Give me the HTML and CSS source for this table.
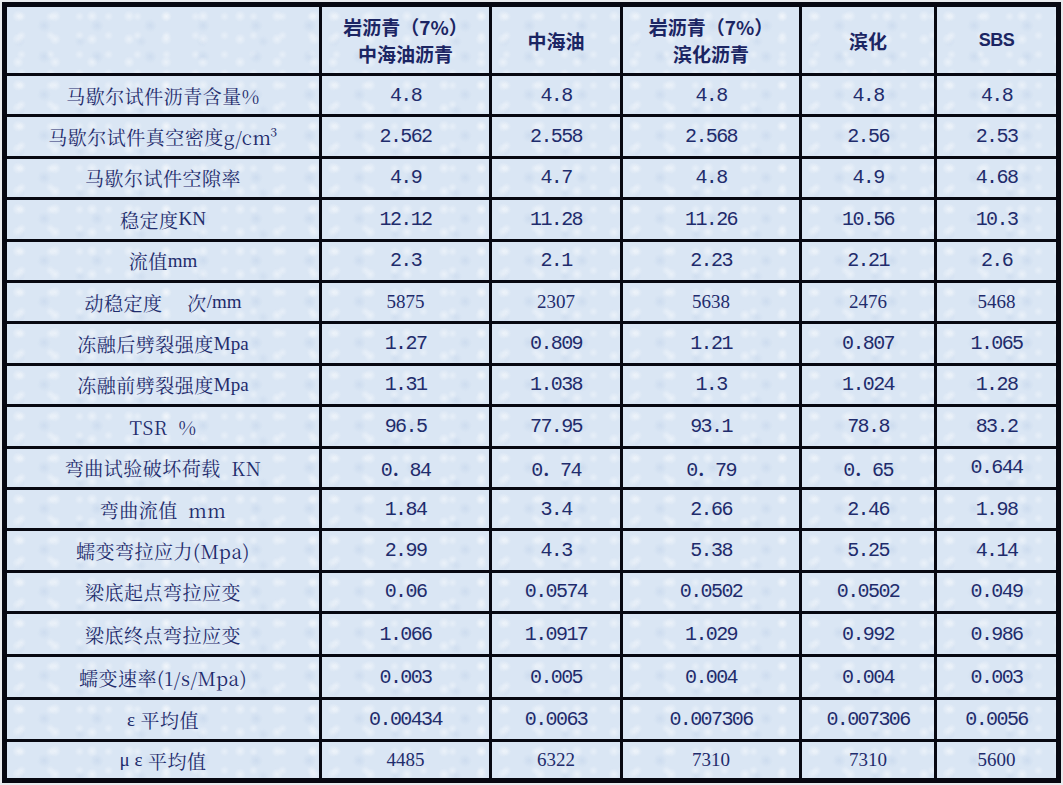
FILE: index.html
```html
<!DOCTYPE html>
<html lang="zh-CN">
<head>
<meta charset="utf-8">
<title>沥青性能对比</title>
<link rel="stylesheet" href="styles.css">
</head>
<body>
<div class="sheet">
  <div class="cell head"></div>
  <div class="cell head">岩沥青（7%）<br>中海油沥青</div>
  <div class="cell head">中海油</div>
  <div class="cell head">岩沥青（7%）<br>滨化沥青</div>
  <div class="cell head">滨化</div>
  <div class="cell head latin">SBS</div>

  <div class="cell label">马歇尔试件沥青含量%</div>
  <div class="cell num">4.8</div><div class="cell num">4.8</div><div class="cell num">4.8</div><div class="cell num">4.8</div><div class="cell num">4.8</div>

  <div class="cell label">马歇尔试件真空密度g/cm³</div>
  <div class="cell num">2.562</div><div class="cell num">2.558</div><div class="cell num">2.568</div><div class="cell num">2.56</div><div class="cell num">2.53</div>

  <div class="cell label">马歇尔试件空隙率</div>
  <div class="cell num">4.9</div><div class="cell num">4.7</div><div class="cell num">4.8</div><div class="cell num">4.9</div><div class="cell num">4.68</div>

  <div class="cell label">稳定度<span class="ser">KN</span></div>
  <div class="cell num">12.12</div><div class="cell num">11.28</div><div class="cell num">11.26</div><div class="cell num">10.56</div><div class="cell num">10.3</div>

  <div class="cell label">流值<span class="ser">mm</span></div>
  <div class="cell num">2.3</div><div class="cell num">2.1</div><div class="cell num">2.23</div><div class="cell num">2.21</div><div class="cell num">2.6</div>

  <div class="cell label">动稳定度　 次<span class="ser">/mm</span></div>
  <div class="cell num ser">5875</div><div class="cell num ser">2307</div><div class="cell num ser">5638</div><div class="cell num ser">2476</div><div class="cell num ser">5468</div>

  <div class="cell label">冻融后劈裂强度<span class="ser">Mpa</span></div>
  <div class="cell num">1.27</div><div class="cell num">0.809</div><div class="cell num">1.21</div><div class="cell num">0.807</div><div class="cell num">1.065</div>

  <div class="cell label">冻融前劈裂强度<span class="ser">Mpa</span></div>
  <div class="cell num">1.31</div><div class="cell num">1.038</div><div class="cell num">1.3</div><div class="cell num">1.024</div><div class="cell num">1.28</div>

  <div class="cell label">TSR  %</div>
  <div class="cell num">96.5</div><div class="cell num">77.95</div><div class="cell num">93.1</div><div class="cell num">78.8</div><div class="cell num">83.2</div>

  <div class="cell label">弯曲试验破坏荷载  KN</div>
  <div class="cell num">0．84</div><div class="cell num">0．74</div><div class="cell num">0．79</div><div class="cell num">0．65</div><div class="cell num">0.644</div>

  <div class="cell label">弯曲流值  mm</div>
  <div class="cell num">1.84</div><div class="cell num">3.4</div><div class="cell num">2.66</div><div class="cell num">2.46</div><div class="cell num">1.98</div>

  <div class="cell label">蠕变弯拉应力(Mpa)</div>
  <div class="cell num">2.99</div><div class="cell num">4.3</div><div class="cell num">5.38</div><div class="cell num">5.25</div><div class="cell num">4.14</div>

  <div class="cell label">梁底起点弯拉应变</div>
  <div class="cell num">0.06</div><div class="cell num">0.0574</div><div class="cell num">0.0502</div><div class="cell num">0.0502</div><div class="cell num">0.049</div>

  <div class="cell label">梁底终点弯拉应变</div>
  <div class="cell num">1.066</div><div class="cell num">1.0917</div><div class="cell num">1.029</div><div class="cell num">0.992</div><div class="cell num">0.986</div>

  <div class="cell label">蠕变速率(1/s/Mpa)</div>
  <div class="cell num">0.003</div><div class="cell num">0.005</div><div class="cell num">0.004</div><div class="cell num">0.004</div><div class="cell num">0.003</div>

  <div class="cell label"><span class="ser">ε</span> 平均值</div>
  <div class="cell num">0.00434</div><div class="cell num">0.0063</div><div class="cell num">0.007306</div><div class="cell num">0.007306</div><div class="cell num">0.0056</div>

  <div class="cell label"><span class="ser">μ ε</span> 平均值</div>
  <div class="cell num ser">4485</div><div class="cell num ser">6322</div><div class="cell num ser">7310</div><div class="cell num ser">7310</div><div class="cell num ser">5600</div>
</div>
</body>
</html>
```

FILE: styles.css
```css
html, body {
  margin: 0;
  padding: 0;
  background: #e9ebee;
}

.sheet {
  margin: 2px 0 0 2px;
  width: 1049px;
  display: grid;
  grid-template-columns: 312px 167px 128px 176px 132px 119px;
  grid-template-rows: 66px repeat(13, 38.4px) 40px 40px 39px 36px;
  gap: 3px;
  padding: 5px;
  background: #070811;
}

.cell {
  display: flex;
  align-items: center;
  justify-content: center;
  text-align: center;
  color: #1f2c6c;
  background-color: #dae6f4;
  background-image:
    radial-gradient(circle at 30% 40%, rgba(255,255,255,0.45) 0, transparent 6px),
    radial-gradient(circle at 70% 60%, rgba(196,213,235,0.55) 0, transparent 7px),
    radial-gradient(circle at 50% 50%, rgba(255,255,255,0.35) 0, transparent 5px),
    radial-gradient(circle at 20% 80%, rgba(200,216,236,0.5) 0, transparent 6px);
  background-size: 37px 23px, 53px 31px, 29px 19px, 61px 43px;
  white-space: pre;
  overflow: hidden;
}

.head {
  font-family: "Noto Sans CJK SC", "Liberation Sans", sans-serif;
  font-weight: 700;
  font-size: 19px;
  line-height: 27px;
  color: #1b2563;
  white-space: normal;
}

.latin {
  font-family: "Liberation Sans", sans-serif;
  font-size: 18px;
  letter-spacing: -0.5px;
}

.label {
  font-family: "Noto Serif CJK SC", "Liberation Mono", "Noto Sans CJK SC", monospace;
  font-size: 19px;
  letter-spacing: 0.5px;
}

.num {
  font-family: "Liberation Mono", "Noto Sans CJK SC", monospace;
  font-size: 20px;
  letter-spacing: -1.6px;
}

.ser {
  font-family: "Liberation Serif", "Noto Sans CJK SC", serif;
  letter-spacing: 0;
}

.num.ser {
  font-size: 19px;
}
```
